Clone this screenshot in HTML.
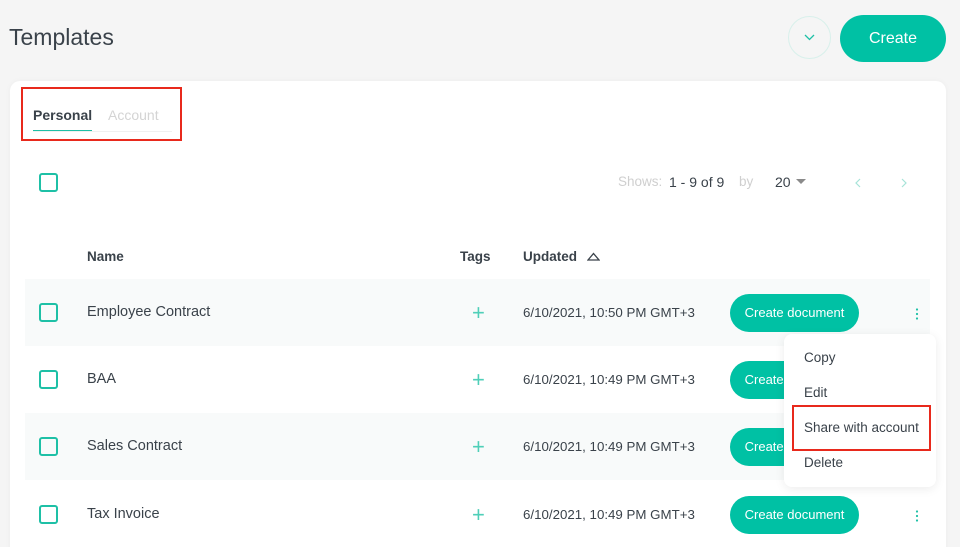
<!DOCTYPE html>
<html><head><style>
*{margin:0;padding:0;box-sizing:border-box}
html,body{width:960px;height:547px;overflow:hidden}
body{background:#f5f5f5;font-family:"Liberation Sans",sans-serif;position:relative;color:#3a424a}
.a{position:absolute}
.cb{position:absolute;width:19px;height:19px;border:2px solid #1ec0a6;border-radius:3px}
.btn{position:absolute;background:#00c1a4;color:#fff;border-radius:19px;font-size:13px;height:38px;line-height:38px;text-align:center}
.row{position:absolute;left:25px;width:905px;height:67px}
.t{position:absolute;font-size:14.5px;color:#3a424a}
.d{position:absolute;font-size:13.3px;color:#3a424a;letter-spacing:0}
.plus{position:absolute;font-size:22px;color:#4fcfb8;font-weight:300}
</style></head><body>
<div class="a" style="left:9px;top:24px;font-size:23px;color:#3a424a">Templates</div>
<div class="a" style="left:788px;top:16px;width:43px;height:43px;border:1px solid #d8f0eb;border-radius:50%"></div>
<svg class="a" style="left:804px;top:34px" width="11" height="7"><path d="M1 1l4.5 4.5L10 1" stroke="#1ec0a6" stroke-width="1.3" fill="none"/></svg>
<div class="btn" style="left:840px;top:15px;width:106px;height:47px;line-height:47px;border-radius:24px;font-size:16px">Create</div>
<div class="a" style="left:10px;top:81px;width:936px;height:480px;background:#fff;border-radius:10px;box-shadow:0 0 6px rgba(0,0,0,.04)"></div>
<div class="a" style="left:33px;top:107px;font-size:14px;font-weight:bold;color:#3a424a">Personal</div>
<div class="a" style="left:108px;top:107px;font-size:14px;color:#d4d4d4">Account</div>
<div class="a" style="left:33px;top:130px;width:59px;height:2px;background:#1ec0a6"></div>
<div class="a" style="left:33px;top:131px;width:139px;height:1px;background:#f0f0f0"></div>
<div class="a" style="left:21px;top:87px;width:161px;height:54px;border:2px solid #e8291c"></div>
<div class="cb" style="left:39px;top:173px"></div>
<div class="a" style="left:618px;top:174px;font-size:13.5px;color:#cfcfcf">Shows:</div>
<div class="a" style="left:669px;top:174px;font-size:14px;color:#3a424a">1 - 9 of 9</div>
<div class="a" style="left:739px;top:174px;font-size:13.5px;color:#cfcfcf">by</div>
<div class="a" style="left:775px;top:174px;font-size:14px;color:#3a424a">20</div>
<svg class="a" style="left:796px;top:179px" width="10" height="6"><path d="M0 0h10L5 5z" fill="#8a8a8a"/></svg>
<svg class="a" style="left:855px;top:178px" width="6" height="10"><path d="M5 1L1 5l4 4" stroke="#a6e3d8" stroke-width="1.2" fill="none"/></svg>
<svg class="a" style="left:901px;top:178px" width="6" height="10"><path d="M1 1l4 4-4 4" stroke="#a6e3d8" stroke-width="1.2" fill="none"/></svg>
<div class="a" style="left:87px;top:249px;font-size:13.5px;font-weight:bold">Name</div>
<div class="a" style="left:460px;top:249px;font-size:13.5px;font-weight:bold">Tags</div>
<div class="a" style="left:523px;top:249px;font-size:13.5px;font-weight:bold">Updated</div>
<svg class="a" style="left:587px;top:252px" width="13" height="9"><path d="M1 8L6.5 1.5 12 8z" stroke="#3a424a" stroke-width="1.3" fill="none"/></svg>

<div class="row" style="top:279px;background:#f8fafa"></div>
<div class="row" style="top:413px;background:#f8fafa"></div>

<div class="cb" style="left:39px;top:303px"></div><div class="t" style="left:87px;top:304px">Employee Contract</div><div class="plus" style="left:472px;top:300px">+</div><div class="d" style="left:523px;top:305px">6/10/2021, 10:50 PM GMT+3</div><div class="btn" style="left:730px;top:294px;width:129px">Create document</div>
<div class="cb" style="left:39px;top:370px"></div><div class="t" style="left:87px;top:371px">BAA</div><div class="plus" style="left:472px;top:367px">+</div><div class="d" style="left:523px;top:372px">6/10/2021, 10:49 PM GMT+3</div><div class="btn" style="left:730px;top:361px;width:129px">Create document</div>
<div class="cb" style="left:39px;top:437px"></div><div class="t" style="left:87px;top:438px">Sales Contract</div><div class="plus" style="left:472px;top:434px">+</div><div class="d" style="left:523px;top:439px">6/10/2021, 10:49 PM GMT+3</div><div class="btn" style="left:730px;top:428px;width:129px">Create document</div>
<div class="cb" style="left:39px;top:505px"></div><div class="t" style="left:87px;top:506px">Tax Invoice</div><div class="plus" style="left:472px;top:502px">+</div><div class="d" style="left:523px;top:507px">6/10/2021, 10:49 PM GMT+3</div><div class="btn" style="left:730px;top:496px;width:129px">Create document</div>

<svg class="a" style="left:915px;top:308px" width="4" height="12"><circle cx="2" cy="1.5" r="1.1" fill="#1ec0a6"/><circle cx="2" cy="6" r="1.1" fill="#1ec0a6"/><circle cx="2" cy="10.5" r="1.1" fill="#1ec0a6"/></svg>
<svg class="a" style="left:915px;top:510px" width="4" height="12"><circle cx="2" cy="1.5" r="1.1" fill="#1ec0a6"/><circle cx="2" cy="6" r="1.1" fill="#1ec0a6"/><circle cx="2" cy="10.5" r="1.1" fill="#1ec0a6"/></svg>

<div class="a" style="left:784px;top:334px;width:152px;height:153px;background:#fff;border-radius:8px;box-shadow:0 2px 10px rgba(0,0,0,.08)"></div>
<div class="a" style="left:804px;top:350px;font-size:13.5px;color:#3a424a">Copy</div>
<div class="a" style="left:804px;top:385px;font-size:13.5px;color:#3a424a">Edit</div>
<div class="a" style="left:804px;top:420px;font-size:13.5px;color:#3a424a">Share with account</div>
<div class="a" style="left:804px;top:455px;font-size:13.5px;color:#3a424a">Delete</div>
<div class="a" style="left:792px;top:405px;width:139px;height:46px;border:2px solid #e8291c"></div>
</body></html>
